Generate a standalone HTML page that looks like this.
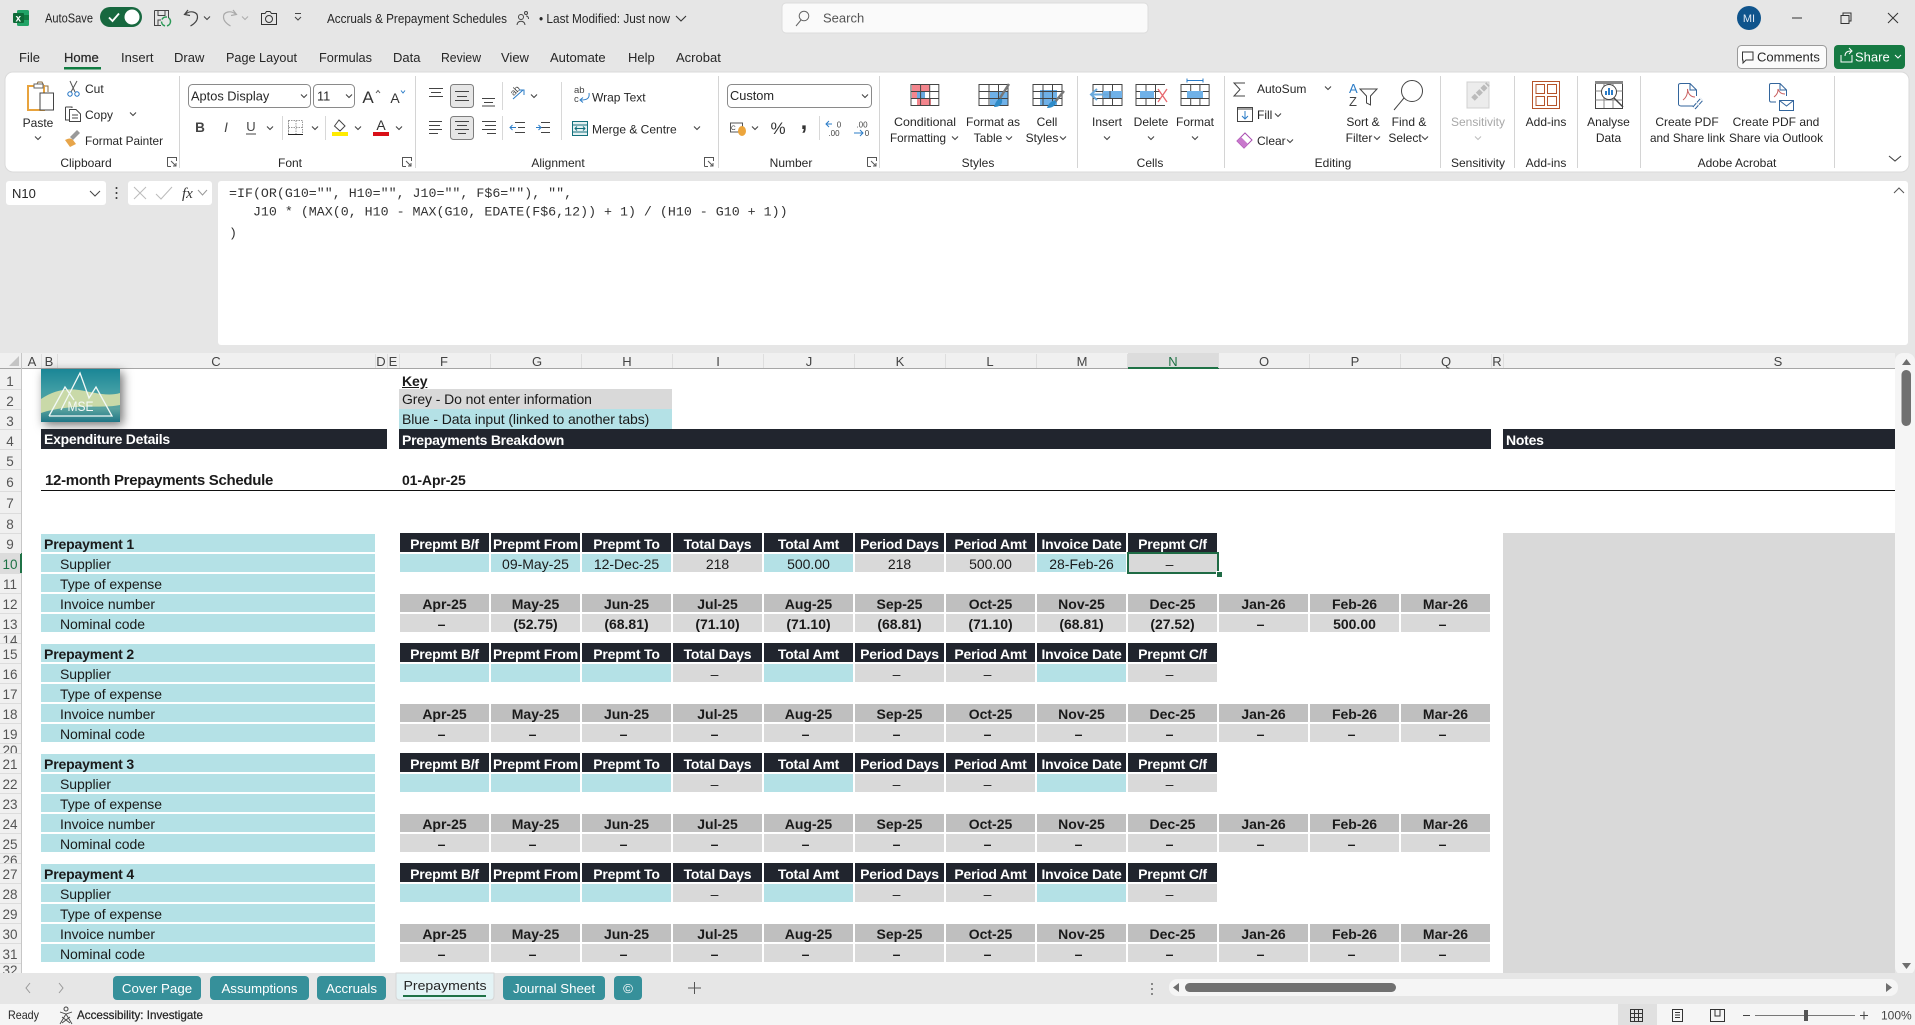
<!DOCTYPE html>
<html lang="en"><head><meta charset="utf-8"><title>Accruals &amp; Prepayment Schedules</title>
<style>
html,body{margin:0;padding:0;width:1915px;height:1025px;overflow:hidden;background:#e6e6e6;font-family:"Liberation Sans",sans-serif}
svg{position:absolute;left:0;top:0}
svg text{font-family:"Liberation Sans",sans-serif;font-size:12px;fill:#262626}
.mid{text-anchor:middle}
.tb{font-size:13px}
.cl{font-size:13px;fill:#444;text-anchor:middle}
.rn{font-size:13.5px;fill:#555;text-anchor:middle}
.wrap{position:absolute;left:0;top:0;width:1915px;height:972px;overflow:hidden}
.a{position:absolute;font-size:14px;color:#1a1a1a;line-height:20px;white-space:nowrap;letter-spacing:-.1px}
.bar{background:#21252e;color:#fff;font-weight:700;height:20px;padding-left:3px;box-sizing:border-box;line-height:21px;letter-spacing:-.25px}
.blk{position:absolute;left:0;width:1500px;height:110px}
.l{position:absolute;left:41px;width:334px;height:18px;background:#b4e1e6;font-size:14px;line-height:20px;color:#1a1a1a;padding-left:19px;box-sizing:border-box;white-space:nowrap;letter-spacing:-.05px}
.l.f{font-weight:700;padding-left:3px;letter-spacing:-.15px}
.r{position:absolute;left:400px;display:flex}
.r i{font-style:normal;display:block;flex:none;width:89px;margin-right:2px;height:18px;text-align:center;font-size:14px;line-height:20px;color:#1a1a1a;white-space:nowrap;overflow:hidden}
.k i{background:#21252e;color:#fff;font-weight:700;height:19px;line-height:22px;letter-spacing:-.2px}
.m i{background:#bfbfbf;font-weight:700}
.v i{background:#d9d9d9;font-weight:700}
.n i{background:#d9d9d9}
.r i.t{background:#b4e1e6}
.r i.d{box-sizing:border-box;padding-right:6px}
</style></head><body>

<svg width="1915" height="1025" viewBox="0 0 1915 1025" xmlns="http://www.w3.org/2000/svg">
<defs>
<path id="cv" d="M-3-1.5 0 1.5 3-1.5" fill="none" stroke="#444" stroke-width="1.1"/>
<g id="ln" fill="none" stroke="#555"><path d="M-4.5 4.5V-4.5H4.5V-1M-4.5 4.5H-1"/><path d="M-1-1 4 4M4 1V4H1"/></g>
<path id="gr" d="M0 .5H29V21.5H0ZM0 7.5H29M0 14.5H29M10 .5V21.5M19.5 .5V21.5" fill="none" stroke="#444"/>
</defs>
<rect width="1915" height="1025" fill="#e6e6e6"/>

<!-- title bar -->
<rect x="17" y="10" width="12" height="16" rx="1.5" fill="#21a366"/><rect x="17" y="15" width="12" height="5" fill="#107c41"/>
<rect x="13" y="13" width="11" height="10" rx="1" fill="#0e6b38"/><text x="15.5" y="21.5" style="font-size:10px;font-weight:700;fill:#fff">x</text>
<text x="45" y="22.5" textLength="48" lengthAdjust="spacingAndGlyphs" style="font-size:12.6px">AutoSave</text>
<rect x="100" y="7" width="42" height="20" rx="10" fill="#17683f"/><path d="M109 17.5 112.5 21 119 13.5" fill="none" stroke="#fff" stroke-width="1.8"/><circle cx="132" cy="17" r="7.5" fill="#fff"/>
<path d="M154.5 10.5H168.5V18M154.5 10.5V25.5H161M158 10.5V15.5H165V10.5M158 25.5V20H161" fill="none" stroke="#444"/>
<circle cx="166" cy="21.5" r="4.5" fill="none" stroke="#2d9a58" stroke-width="1.5" stroke-dasharray="6 2"/>
<path d="M188 10 184.5 14.5 190 15.5M185 14.5C190 10 197.5 11.5 197.5 17 197.5 21 194 24 190.5 26" fill="none" stroke="#444" stroke-width="1.2"/>
<use href="#cv" x="207" y="18"/>
<path d="M233 10 236.5 14.500 231 15.5M236 14.5C231 10 223.5 11.5 223.5 17 223.5 21 227 24 230.5 26" fill="none" stroke="#aaa" stroke-width="1.2"/>
<use href="#cv" x="245" y="18" opacity=".35"/>
<path d="M261.5 13.5H265L266.5 11.5H270L271.5 13.5H276.5V24.5H261.5Z" fill="none" stroke="#333"/><circle cx="269" cy="19" r="3.5" fill="none" stroke="#333"/>
<path d="M295 13.5H301M295 17 298 20 301 17" fill="none" stroke="#444"/>
<text x="327" y="23" textLength="180" lengthAdjust="spacingAndGlyphs" style="font-size:12.7px">Accruals &amp; Prepayment Schedules</text>
<circle cx="521" cy="17" r="2.5" fill="none" stroke="#444"/><path d="M517 25C517 20 525 20 525 25" fill="none" stroke="#444"/><circle cx="526" cy="13" r="1.5" fill="none" stroke="#444"/><path d="M526 16C527.5 16 528.500 17 528.500 19" fill="none" stroke="#444"/>
<text x="539" y="23" textLength="131" lengthAdjust="spacingAndGlyphs" style="font-size:12.7px">• Last Modified: Just now</text>
<path d="M676 16 681 21 686 16" fill="none" stroke="#333" stroke-width="1.1"/>
<rect x="782" y="3" width="366" height="30" rx="4" fill="#fafafa" stroke="#dcdcdc"/>
<circle cx="804" cy="16" r="4.8" fill="none" stroke="#666"/><path d="M801 20 796 26" stroke="#666" fill="none"/>
<text x="823" y="22.5" style="font-size:13px;fill:#555">Search</text>
<circle cx="1749" cy="18" r="12" fill="#0f548c"/><text x="1749" y="22" class="mid" style="font-size:11px;fill:#dfe9f3">MI</text>
<path d="M1792 18H1802" stroke="#333"/><path d="M1841 15.5H1849V23.5H1841ZM1843 15.5V13H1851V21H1849" fill="none" stroke="#333"/><path d="M1888 13 1898 23M1898 13 1888 23" stroke="#333"/>

<!-- menu tabs -->
<text x="19" y="62" class="tb">File</text><text x="64" y="62" class="tb" style="stroke:#262626;stroke-width:.2">Home</text><text x="121" y="62" class="tb">Insert</text><text x="174" y="62" class="tb">Draw</text><text x="226" y="62" class="tb" textLength="71" lengthAdjust="spacingAndGlyphs">Page Layout</text><text x="319" y="62" class="tb" textLength="53" lengthAdjust="spacingAndGlyphs">Formulas</text><text x="393" y="62" class="tb">Data</text><text x="441" y="62" class="tb" textLength="40" lengthAdjust="spacingAndGlyphs">Review</text><text x="501" y="62" class="tb">View</text><text x="550" y="62" class="tb">Automate</text><text x="628" y="62" class="tb">Help</text><text x="676" y="62" class="tb">Acrobat</text>
<rect x="64" y="67" width="37" height="2.5" fill="#107c41"/>
<rect x="1737.5" y="45.5" width="89" height="23" rx="4" fill="#fbfbfb" stroke="#9a9a9a"/>
<path d="M1742.5 52H1753V60H1746L1743 63V60H1742.5Z" fill="none" stroke="#333"/><text x="1757" y="61.5" style="font-size:13px">Comments</text>
<rect x="1834" y="45" width="71" height="24" rx="4" fill="#167a43"/>
<path d="M1841 55V62H1852V55M1845 56C1845 52 1848 51 1851 51M1849 48 1852 51 1849 54" fill="none" stroke="#fff"/><text x="1855" y="61.5" style="font-size:13px;fill:#fff">Share</text>
<path d="M1895 55 1898 58 1901 55" fill="none" stroke="#fff"/>

<!-- ribbon -->
<rect x="5" y="72" width="1904" height="100" rx="8" fill="#fff" stroke="#dadada"/>
<g stroke="#d4d4d4"><path d="M179.5 76V168M415.5 76V168M718.5 76V168M879.5 76V168M1077.5 76V168M1224.5 76V168M1440.5 76V168M1514.5 76V168M1577.5 76V168M1640.5 76V168M1834.5 76V168"/></g>
<g stroke="#d8d8d8"><path d="M282.5 116V140M325.5 116V140M502.5 82V110M502.5 116V140M561.5 82V140M819.5 116V140"/></g>
<!-- group labels -->
<text x="86" y="167" class="mid">Clipboard</text><text x="290" y="167" class="mid">Font</text><text x="558" y="167" class="mid">Alignment</text><text x="791" y="167" class="mid">Number</text><text x="978" y="167" class="mid">Styles</text><text x="1150" y="167" class="mid">Cells</text><text x="1333" y="167" class="mid">Editing</text><text x="1478" y="167" class="mid">Sensitivity</text><text x="1546" y="167" class="mid">Add-ins</text><text x="1737" y="167" class="mid">Adobe Acrobat</text>
<use href="#ln" x="172" y="162"/><use href="#ln" x="407" y="162"/><use href="#ln" x="709" y="162"/><use href="#ln" x="872" y="162"/>
<path d="M1889 156 1895 161 1901 156" fill="none" stroke="#444" stroke-width="1.1"/>

<!-- clipboard -->
<path d="M28 86H36L38 82H42L44 86H48V92" fill="none" stroke="#8a6b3c"/><rect x="28" y="86" width="16" height="24" fill="#fff" stroke="#e8a33d" stroke-width="2"/><path d="M34 84H43V88H34Z" fill="#fff" stroke="#666"/>
<rect x="40" y="93" width="13.5" height="17" fill="#fff" stroke="#444"/>
<text x="38" y="127" class="mid">Paste</text><use href="#cv" x="38" y="138"/>
<path d="M70 81 75 92M77 81 71 92" stroke="#555" fill="none"/><circle cx="70" cy="94" r="2.2" fill="none" stroke="#1b6fc2"/><circle cx="77" cy="94" r="2.2" fill="none" stroke="#1b6fc2"/>
<text x="85" y="93">Cut</text>
<path d="M65.5 107H72V108M65.5 107V120H69" fill="none" stroke="#444"/><path d="M69.5 109.5H76L80.5 114V121.5H69.5ZM72 115H78M72 118H78" fill="none" stroke="#444"/>
<text x="85" y="119">Copy</text><use href="#cv" x="133" y="114"/>
<path d="M73 140 80 133 77 130 70 137Z" fill="#999"/><path d="M65 140C69 138 71 138 73 140L76 144 70 147Z" fill="#e7a54a"/>
<text x="85" y="145" textLength="78" lengthAdjust="spacingAndGlyphs">Format Painter</text>

<!-- font -->
<rect x="188.5" y="84.5" width="122" height="23" rx="4" fill="#fff" stroke="#8a8a8a"/><text x="191" y="100.5" style="font-size:12.8px">Aptos Display</text><use href="#cv" x="304" y="96"/>
<rect x="313.5" y="84.5" width="41" height="23" rx="4" fill="#fff" stroke="#8a8a8a"/><text x="317" y="100.5" style="font-size:12.8px">11</text><use href="#cv" x="349" y="96"/>
<text x="368" y="103" class="mid" style="font-size:17px;fill:#333">A</text><path d="M376 93 378 90.5 380 93" fill="none" stroke="#555"/>
<text x="395" y="103" class="mid" style="font-size:14px;fill:#333">A</text><path d="M401 90.5 403 93 405 90.5" fill="none" stroke="#2b7cc7"/>
<text x="200" y="132" class="mid" style="font-size:13.5px;font-weight:700;fill:#444">B</text>
<text x="226" y="132" class="mid" style="font-size:13.5px;font-style:italic;fill:#444">I</text>
<text x="251" y="131" class="mid" style="font-size:13px;fill:#444">U</text><path d="M246 134H256" stroke="#444"/><use href="#cv" x="270" y="128"/>
<path d="M288.5 120.5V134.5M296 120.5V134.5M288.5 127.5H303" stroke="#999" stroke-dasharray="1.5 1" fill="none"/><rect x="288.5" y="120.5" width="14" height="14" fill="none" stroke="#999" stroke-dasharray="1.5 1"/><path d="M288 134.5H303" stroke="#222"/><use href="#cv" x="315" y="128"/>
<path d="M339 120 345 126 340 131 334.5 126Z" fill="#fff" stroke="#444"/><rect x="332" y="132" width="16" height="4" fill="#ffeb00"/><use href="#cv" x="358" y="128"/>
<text x="381" y="130" class="mid" style="font-size:14px;fill:#333">A</text><rect x="373" y="132" width="16" height="4" fill="#d90f17"/><use href="#cv" x="399" y="128"/>

<!-- alignment -->
<rect x="450.5" y="84.5" width="23" height="23" rx="3" fill="#e6e6e6" stroke="#7e7e7e"/>
<rect x="450.5" y="116.5" width="23" height="23" rx="3" fill="#e6e6e6" stroke="#7e7e7e"/>
<g stroke="#444" fill="none">
<path d="M429 88.5H443M431 92.5H441M429 96.5H443"/>
<path d="M455 91.5H469M457 96.5H467M455 100.5H469"/>
<path d="M482 98.5H495M484 102.5H493M482 106H495"/>
<path d="M429 121.5H442M429 125.5H440M429 129.5H442M429 133.5H438"/>
<path d="M455 121.5H469M457 125.5H467M455 129.5H469M458 133.5H466"/>
<path d="M482 121.5H496M485 125.5H496M482 129.5H496M487 133.5H496"/>
<path d="M515 122.5H525M518 127.5H525M515 132.5H525"/>
<path d="M541 122.5H550M541 127.5H550M541 132.5H550"/>
</g>
<path d="M510 127.5H516M512.5 125 510 127.5 512.5 130" fill="none" stroke="#2b7cc7"/>
<path d="M536 127.5H540M538.5 125 541 127.5 538.5 130" fill="none" stroke="#2b7cc7"/>
<text x="511" y="94" style="font-size:9px;fill:#444" transform="rotate(-45 515 92)">ab</text><path d="M513 99 523 90M519 90H524V95" fill="none" stroke="#2b7cc7"/><use href="#cv" x="534" y="96"/>
<text x="574" y="93" style="font-size:9.5px;fill:#444">ab</text><text x="574" y="102" style="font-size:9.5px;fill:#444">c</text><path d="M589 93C590 99 586 100 581 100M583 97.5 580 100 583 102.5" fill="none" stroke="#2b7cc7"/>
<text x="592" y="101.5">Wrap Text</text>
<rect x="572.5" y="121.5" width="15" height="14" fill="#e4f1f2" stroke="#13707c"/><path d="M572.5 125H587.5M572.5 132H587.5M575 128.5H585M577 126.5 575 128.5 577 130.5M583 126.5 585 128.5 583 130.5" fill="none" stroke="#13707c"/>
<text x="592" y="133.5">Merge &amp; Centre</text><use href="#cv" x="697" y="128"/>

<!-- number -->
<rect x="727.5" y="84.5" width="144" height="23" rx="4" fill="#fff" stroke="#8a8a8a"/><text x="730" y="100" style="font-size:12.8px">Custom</text><use href="#cv" x="865" y="96"/>
<rect x="730.5" y="123" width="12" height="9" fill="#fff" stroke="#555"/><ellipse cx="742" cy="131" rx="4" ry="5" fill="#eca53c"/><text x="731" y="130" style="font-size:6.5px;fill:#333">C</text>
<use href="#cv" x="755" y="128"/>
<text x="778" y="134" class="mid" style="font-size:17px;fill:#333">%</text>
<text x="804" y="129" class="mid" style="font-size:24px;font-weight:700;fill:#333">,</text>
<path d="M832 124H826M829 121 826 124 829 127" fill="none" stroke="#2b7cc7"/><text x="839" y="127.5" class="mid" style="font-size:8px;fill:#444">0</text><text x="834" y="136" class="mid" style="font-size:8px;fill:#444">.00</text>
<path d="M854 133H863M860 130 863 133 860 136" fill="none" stroke="#2b7cc7"/><text x="862" y="127.5" class="mid" style="font-size:8px;fill:#444">.00</text><text x="867" y="136" class="mid" style="font-size:8px;fill:#444">0</text>

<!-- styles -->
<rect x="912" y="84" width="18" height="7" fill="#f3858d"/><rect x="912" y="91" width="5" height="7" fill="#f3858d"/><rect x="917" y="91" width="8" height="7" fill="#6aa9e0"/><rect x="917" y="98" width="14" height="8" fill="#f3858d"/>
<use href="#gr" transform="translate(911 84) scale(.96 1)"/>
<text x="925" y="126" class="mid" textLength="62" lengthAdjust="spacingAndGlyphs">Conditional</text><text x="918" y="142" class="mid" textLength="56" lengthAdjust="spacingAndGlyphs">Formatting</text><use href="#cv" x="955" y="138"/>
<rect x="990" y="91" width="18" height="15" fill="#6fb1e8"/><use href="#gr" transform="translate(979 84)"/>
<path d="M1009 84 1000 98" stroke="#777" stroke-width="2.5"/><path d="M994 107C996 100 999 98 1002 99 1003 104 1000 107 994 107Z" fill="#2e8bc8"/>
<text x="993" y="126" class="mid">Format as</text><text x="988" y="142" class="mid">Table</text><use href="#cv" x="1009" y="138"/>
<rect x="1040" y="90" width="17" height="15" fill="#6fb1e8"/><use href="#gr" transform="translate(1033 84)"/>
<path d="M1064 91 1055 102" stroke="#777" stroke-width="2.5"/><path d="M1047 108C1049 102 1053 100 1056 101 1056 106 1052 108 1047 108Z" fill="#2e8bc8"/>
<text x="1047" y="126" class="mid">Cell</text><text x="1042" y="142" class="mid">Styles</text><use href="#cv" x="1063" y="138"/>

<!-- cells -->
<use href="#gr" transform="translate(1093 84)"/><rect x="1103" y="91" width="19" height="7" fill="#6fb1e8"/><path d="M1110 91V98" stroke="#444"/><path d="M1091 94.5H1108M1097 89 1091 94.5 1097 100" fill="none" stroke="#69a9dc" stroke-width="2"/>
<text x="1107" y="126" class="mid">Insert</text><use href="#cv" x="1107" y="138"/>
<use href="#gr" transform="translate(1136 84)"/><rect x="1140" y="91" width="14" height="7" fill="#6fb1e8"/><rect x="1157" y="84" width="11" height="22" fill="#fff"/><path d="M1157 84.5H1165M1157 105.5H1165M1157 91.5H1160M1157 98.5H1160" stroke="#444"/><path d="M1158 89 1167 102M1167 89 1158 102" stroke="#e8686e" stroke-width="1.3"/>
<text x="1151" y="126" class="mid">Delete</text><use href="#cv" x="1151" y="138"/>
<use href="#gr" transform="translate(1181 84) scale(.97 1)"/><rect x="1187" y="91" width="16" height="7" fill="#6fb1e8"/><path d="M1187 80.5H1203M1187 78.5V82.5M1203 78.5V82.5" stroke="#2b7cc7" fill="none"/>
<text x="1195" y="126" class="mid">Format</text><use href="#cv" x="1195" y="138"/>

<!-- editing -->
<path d="M1245 83H1234L1240 89.5 1234 96H1245" fill="none" stroke="#444"/>
<text x="1257" y="93">AutoSum</text><use href="#cv" x="1328" y="88"/>
<rect x="1237.5" y="107.5" width="15" height="14" fill="#fff" stroke="#444"/><path d="M1237.5 109H1252.5" stroke="#444"/><path d="M1245 111V119M1242 116 1245 119 1248 116" fill="none" stroke="#2b7cc7"/>
<text x="1257" y="119">Fill</text><use href="#cv" x="1278" y="115"/>
<path d="M1237 141 1245 133 1252 140 1244 148Z" fill="#fff" stroke="#a94db0"/><path d="M1237 141 1241 137 1248 144 1244 148Z" fill="#c878cc"/>
<text x="1257" y="145">Clear</text><use href="#cv" x="1290" y="141"/>
<text x="1349" y="93" style="font-size:13px;fill:#2b7cc7">A</text><text x="1349" y="106" style="font-size:13px;fill:#444">Z</text>
<path d="M1360 89H1377L1370.5 96V105L1366.5 103V96Z" fill="none" stroke="#444"/>
<text x="1363" y="126" class="mid">Sort &amp;</text><text x="1359" y="142" class="mid">Filter</text><use href="#cv" x="1377" y="138"/>
<circle cx="1412" cy="91" r="10.5" fill="none" stroke="#444"/><path d="M1404 98 1394 110" stroke="#444" fill="none"/>
<text x="1409" y="126" class="mid">Find &amp;</text><text x="1405" y="142" class="mid">Select</text><use href="#cv" x="1425" y="138"/>

<!-- sensitivity -->
<rect x="1467" y="82" width="22" height="26" fill="#ececec" stroke="#d0d0d0"/><path d="M1473 99 1488 84" stroke="#bbb" stroke-width="5" stroke-dasharray="5 1.5"/>
<text x="1478" y="126" class="mid" style="fill:#a8a8a8">Sensitivity</text><use href="#cv" x="1478" y="138" opacity=".35"/>

<!-- add-ins -->
<rect x="1532.5" y="81.5" width="27" height="27" fill="#fff" stroke="#b5532a"/><path d="M1536 84.5H1544.5V93.5H1536ZM1547.5 84.5H1556.5V93.5H1547.5ZM1536 96.5H1544.5V105.5H1536ZM1547.5 96.5H1556.5V105.5H1547.5Z" fill="none" stroke="#b5532a"/>
<text x="1546" y="126" class="mid">Add-ins</text>
<rect x="1595.5" y="81.5" width="27" height="27" fill="#fff" stroke="#444"/><rect x="1595" y="81" width="28" height="3" fill="#888"/><path d="M1595.5 91H1622.5M1595.5 100H1622.5M1604 84V108M1613 84V108" stroke="#888"/><circle cx="1609" cy="92" r="7.5" fill="#fff" stroke="#444"/><path d="M1606 95V91M1609 95V88M1612 95V90" stroke="#2b7cc7" stroke-width="2"/><path d="M1614 98 1623 107" stroke="#444" stroke-width="1.4"/>
<text x="1608.5" y="126" class="mid">Analyse</text><text x="1608.5" y="142" class="mid">Data</text>

<!-- acrobat -->
<path d="M1693 106H1681C1679.5 106 1678.5 105 1678.5 104V85C1678.5 84 1679.5 83.5 1681 83.5H1690L1696.5 90V96" fill="none" stroke="#33659c"/><path d="M1690 83.5V90H1696.5" fill="none" stroke="#33659c"/><path d="M1683 100C1687 97 1688 92 1687.5 89 1688 94 1691 97 1695 97" fill="none" stroke="#c96060"/>
<path d="M1694 108 1702 99" fill="none" stroke="#33659c" stroke-width="4" stroke-dasharray="5 1"/><path d="M1694 108 1702 99" fill="none" stroke="#fff" stroke-width="2" stroke-dasharray="5 1"/>
<text x="1687" y="126" class="mid">Create PDF</text><text x="1687.500" y="142" class="mid" textLength="75" lengthAdjust="spacingAndGlyphs">and Share link</text>
<path d="M1776 102H1771C1770 102 1769.5 101 1769.5 100V85C1769.5 84 1770 83.5 1771 83.5H1780L1786.5 90V96" fill="none" stroke="#33659c"/><path d="M1780 83.5V90H1786.5" fill="none" stroke="#33659c"/><path d="M1774 97C1778 94 1778 91 1778 89 1779 92 1781 94 1785 94" fill="none" stroke="#c96060"/>
<rect x="1779.5" y="100.5" width="14" height="10" fill="#fff" stroke="#33659c"/><path d="M1779.5 100.5 1786.5 106 1793.5 100.5" fill="none" stroke="#33659c"/>
<text x="1776" y="126" class="mid">Create PDF and</text><text x="1776" y="142" class="mid" textLength="94" lengthAdjust="spacingAndGlyphs">Share via Outlook</text>

<!-- formula bar -->
<rect x="6" y="181" width="100" height="24" rx="3" fill="#fff"/><text x="12" y="198" style="font-size:13px">N10</text><path d="M90 191 95 196 100 191" fill="none" stroke="#444"/>
<circle cx="116.5" cy="188" r="1" fill="#333"/><circle cx="116.5" cy="193" r="1" fill="#333"/><circle cx="116.5" cy="198" r="1" fill="#333"/>
<rect x="128" y="181" width="84" height="24" rx="3" fill="#fff"/><path d="M134 187 146 199M146 187 134 199" stroke="#bbb" fill="none"/><path d="M156 194 161 199 172 187" stroke="#bbb" fill="none"/>
<text x="182" y="198" style="font-family:'Liberation Serif',serif;font-style:italic;font-size:15px;fill:#333">fx</text><path d="M198 190 202.5 195 207 190" fill="none" stroke="#999"/>
<rect x="218" y="181" width="1690" height="164" rx="3" fill="#fff"/>
<text x="229" y="197" xml:space="preserve" style="font-family:'Liberation Mono',monospace;font-size:13.3px;fill:#333">=IF(OR(G10="", H10="", J10="", F$6=""), "",</text>
<text x="229" y="215.5" xml:space="preserve" style="font-family:'Liberation Mono',monospace;font-size:13.3px;fill:#333">   J10 * (MAX(0, H10 - MAX(G10, EDATE(F$6,12)) + 1) / (H10 - G10 + 1))</text>
<text x="229" y="237" xml:space="preserve" style="font-family:'Liberation Mono',monospace;font-size:13.3px;fill:#333">)</text>
<path d="M1894 193 1899 188 1904 193" fill="none" stroke="#555"/>

<!-- grid headers -->
<rect x="0" y="353" width="1895" height="16" fill="#f0f0f0"/>
<rect x="0" y="369" width="22" height="604" fill="#f0f0f0"/>
<rect x="22" y="369" width="1873" height="604" fill="#fff"/>
<path d="M0 368.5H1895" stroke="#a6a6a6"/><path d="M21.5 353V973" stroke="#c6c6c6"/>
<path d="M19 366H9L19 356Z" fill="#c4c4c4"/>
<rect x="1128" y="353" width="91" height="16" fill="#dcdcdc"/><rect x="1128" y="367" width="91" height="2" fill="#1f7246"/>
<g stroke="#dedede"><path d="M41.5 354V368M57.5 354V368M375.5 354V368M387.5 354V368M399.5 354V368M490.5 354V368M581.5 354V368M672.5 354V368M763.5 354V368M854.5 354V368M945.5 354V368M1036.5 354V368M1127.5 354V368M1218.5 354V368M1309.5 354V368M1400.5 354V368M1491.5 354V368M1503.5 354V368"/></g>
<text x="32" y="366" class="cl">A</text><text x="49" y="366" class="cl">B</text><text x="216" y="366" class="cl">C</text><text x="381" y="366" class="cl">D</text><text x="393" y="366" class="cl">E</text><text x="444" y="366" class="cl">F</text><text x="537" y="366" class="cl">G</text><text x="627" y="366" class="cl">H</text><text x="718" y="366" class="cl">I</text><text x="809" y="366" class="cl">J</text><text x="900" y="366" class="cl">K</text><text x="990" y="366" class="cl">L</text><text x="1082" y="366" class="cl">M</text><text x="1173" y="366" class="cl" style="fill:#1f7246">N</text><text x="1264" y="366" class="cl">O</text><text x="1355" y="366" class="cl">P</text><text x="1446" y="366" class="cl">Q</text><text x="1497" y="366" class="cl">R</text><text x="1778" y="366" class="cl">S</text>
<rect x="0" y="553" width="22" height="20" fill="#dcdcdc"/><rect x="20" y="553" width="2" height="20" fill="#1f7246"/>
<g stroke="#dcdcdc"><path d="M0 389.5H21M0 409.5H21M0 429.5H21M0 449.5H21M0 469.5H21M0 491.5H21M0 513.5H21M0 533.5H21M0 553.5H21M0 573.5H21M0 593.5H21M0 613.5H21M0 633.5H21M0 643.5H21M0 663.5H21M0 683.5H21M0 703.5H21M0 723.5H21M0 743.5H21M0 753.5H21M0 773.5H21M0 793.5H21M0 813.5H21M0 833.5H21M0 853.5H21M0 863.5H21M0 883.5H21M0 903.5H21M0 923.5H21M0 943.5H21M0 963.5H21"/></g>
<text x="10" y="386" class="rn">1</text><text x="10" y="406" class="rn">2</text><text x="10" y="426" class="rn">3</text><text x="10" y="446" class="rn">4</text><text x="10" y="466" class="rn">5</text><text x="10" y="487" class="rn">6</text><text x="10" y="508" class="rn">7</text><text x="10" y="529" class="rn">8</text><text x="10" y="549" class="rn">9</text>
<text x="10" y="569" class="rn" style="fill:#1f7246">10</text><text x="10" y="589" class="rn">11</text><text x="10" y="609" class="rn">12</text><text x="10" y="629" class="rn">13</text>
<svg x="0" y="634" width="21" height="9"><text x="10" y="11" class="rn" style="font-size:13.5px">14</text></svg>
<text x="10" y="659" class="rn">15</text><text x="10" y="679" class="rn">16</text><text x="10" y="699" class="rn">17</text><text x="10" y="719" class="rn">18</text><text x="10" y="739" class="rn">19</text>
<svg x="0" y="744" width="21" height="9"><text x="10" y="11" class="rn" style="font-size:13.5px">20</text></svg>
<text x="10" y="769" class="rn">21</text><text x="10" y="789" class="rn">22</text><text x="10" y="809" class="rn">23</text><text x="10" y="829" class="rn">24</text><text x="10" y="849" class="rn">25</text>
<svg x="0" y="854" width="21" height="9"><text x="10" y="11" class="rn" style="font-size:13.5px">26</text></svg>
<text x="10" y="879" class="rn">27</text><text x="10" y="899" class="rn">28</text><text x="10" y="919" class="rn">29</text><text x="10" y="939" class="rn">30</text><text x="10" y="959" class="rn">31</text>
<svg x="0" y="964" width="21" height="9"><text x="10" y="11" class="rn" style="font-size:13.5px">32</text></svg>

<!-- v scrollbar -->
<rect x="1895" y="353" width="20" height="622" rx="8" fill="#f5f5f5"/>
<path d="M1902 365H1911L1906.5 359Z" fill="#6e6e6e"/><rect x="1901.5" y="370" width="9.5" height="56" rx="4.7" fill="#707070"/><path d="M1902 963H1911L1906.5 969Z" fill="#6e6e6e"/>

<!-- notes area -->
<rect x="1503" y="533" width="392" height="440" fill="#d9d9d9"/>

<!-- sheet tabs -->
<rect x="0" y="973" width="1915" height="31" fill="#e6e6e6"/>
<path d="M30 983 26 988 30 993M59 983 63 988 59 993" fill="none" stroke="#999"/>
<rect x="113" y="976" width="88" height="24" rx="4" fill="#36909a"/><text x="157" y="993" class="mid" style="font-size:13.3px;fill:#fff">Cover Page</text>
<rect x="210" y="976" width="99" height="24" rx="4" fill="#36909a"/><text x="259.5" y="993" class="mid" style="font-size:13.3px;fill:#fff">Assumptions</text>
<rect x="317" y="976" width="69" height="24" rx="4" fill="#36909a"/><text x="351.5" y="993" class="mid" style="font-size:13.3px;fill:#fff">Accruals</text>
<path d="M396 973H494V996C494 999 492 1000 490 1000H400C398 1000 396 999 396 996Z" fill="#e4f3f5" stroke="#d6d6d6"/><text x="445" y="990" class="mid" textLength="83" lengthAdjust="spacingAndGlyphs" style="font-size:13.3px">Prepayments</text><rect x="403" y="995" width="83" height="2" fill="#1f7246"/>
<rect x="503" y="976" width="102" height="24" rx="4" fill="#36909a"/><text x="554" y="993" class="mid" style="font-size:13.3px;fill:#fff">Journal Sheet</text>
<rect x="614" y="976" width="28" height="24" rx="4" fill="#36909a"/><text x="628" y="993" class="mid" style="font-size:13.3px;fill:#fff">©</text>
<path d="M694.5 982V994M688 988H701" stroke="#555"/>

<!-- h scrollbar -->
<circle cx="1152" cy="984" r=".9" fill="#444"/><circle cx="1152" cy="989" r=".9" fill="#444"/><circle cx="1152" cy="994" r=".9" fill="#444"/>
<rect x="1169" y="979" width="729" height="17" rx="8" fill="#f5f5f5"/>
<path d="M1179 983V992L1173 987.5Z" fill="#6e6e6e"/><rect x="1185" y="983" width="211" height="9" rx="4.5" fill="#707070"/><path d="M1886 983V992L1892 987.5Z" fill="#6e6e6e"/>

<!-- status -->
<rect x="0" y="1004" width="1915" height="21" fill="#f5f5f5"/>
<text x="8" y="1019" textLength="31" lengthAdjust="spacingAndGlyphs" style="font-size:12px">Ready</text>
<circle cx="66" cy="1009" r="2" fill="none" stroke="#444"/><path d="M60 1012 66 1014 72 1012M66 1014 60 1024M66 1014 72 1024M62 1017 70 1023M70 1017 62 1023" fill="none" stroke="#444" stroke-width=".9"/>
<text x="77" y="1019" textLength="126" lengthAdjust="spacingAndGlyphs" style="font-size:11.8px;stroke:#262626;stroke-width:.25">Accessibility: Investigate</text>
<rect x="1618" y="1004" width="39" height="21" fill="#e0e0e0"/>
<path d="M1630.5 1009.5H1642.5V1021.5H1630.5ZM1630.5 1013.5H1642.5M1630.5 1017.5H1642.5M1634.5 1009.5V1021.5M1638.5 1009.5V1021.5" fill="none" stroke="#333"/>
<path d="M1672.5 1009.5H1682.5V1021.5H1672.5ZM1675 1012.5H1680M1675 1015H1680M1675 1017.5H1680" fill="none" stroke="#333"/>
<path d="M1710.5 1009.5H1724.5V1021.5H1710.5ZM1715 1009.5V1016H1720V1009.5" fill="none" stroke="#333"/>
<path d="M1743 1015.5H1750M1860 1015.5H1868M1864 1011.5V1019.5" stroke="#444"/><path d="M1755 1015.5H1855" stroke="#777"/><rect x="1804" y="1010" width="4" height="11" fill="#555"/>
<text x="1881" y="1019.5" style="font-size:12px;fill:#444">100%</text>
</svg>

<div class="wrap">
<!-- logo -->
<svg style="left:41px;top:369px;filter:drop-shadow(3px 3px 5px rgba(0,0,0,.55))" width="79" height="53" viewBox="0 0 79 53" overflow="visible">
<defs><linearGradient id="lg" x1="0" y1="0" x2="0" y2="1"><stop offset="0" stop-color="#1a8696"/><stop offset=".4" stop-color="#3f9da4"/><stop offset=".75" stop-color="#5aa39f"/><stop offset="1" stop-color="#1f7686"/></linearGradient></defs>
<rect width="79" height="53" fill="url(#lg)"/>
<path d="M0 30C12 22 24 19 38 21 52 23 66 28 79 24V36C60 40 30 34 0 44Z" fill="#c9d9a8"/>
<path d="M8 47H71L55 18 48 29 39 4 20 41M8 47 24 18 33 31" fill="none" stroke="#f2f9f7" stroke-width="1.3"/>
<text x="39.500" y="42" class="mid" textLength="26" lengthAdjust="spacingAndGlyphs" style="font-size:14px;fill:#f4f9f7">MSE</text>
</svg>

<div class="a" style="left:402px;top:371px;font-weight:700;text-decoration:underline">Key</div>
<div class="a" style="left:399px;top:389px;width:273px;height:20px;background:#d9d9d9;padding-left:3px;box-sizing:border-box">Grey - Do not enter information</div>
<div class="a" style="left:399px;top:409px;width:273px;height:20px;background:#b4e1e6;padding-left:3px;box-sizing:border-box">Blue - Data input (linked to another tabs)</div>
<div class="a bar" style="left:41px;top:429px;width:346px">Expenditure Details</div>
<div class="a bar" style="left:399px;top:429px;width:1092px;line-height:22px">Prepayments Breakdown</div>
<div class="a bar" style="left:1503px;top:429px;width:392px;line-height:22px">Notes</div>
<div class="a" style="left:45px;top:471px;font-weight:700;font-size:15px;letter-spacing:-.3px">12-month Prepayments Schedule</div>
<div class="a" style="left:402px;top:470px;font-weight:700">01-Apr-25</div>
<div class="a" style="left:41px;top:489.5px;width:1854px;height:1.5px;background:#111"></div>

<div class="blk" style="top:533px">
<div class="l f" style="top:1px">Prepayment 1</div><div class="l" style="top:21px">Supplier</div><div class="l" style="top:41px">Type of expense</div><div class="l" style="top:61px">Invoice number</div><div class="l" style="top:81px">Nominal code</div>
<div class="r k" style="top:0"><i>Prepmt B/f</i><i>Prepmt From</i><i>Prepmt To</i><i>Total Days</i><i>Total Amt</i><i>Period Days</i><i>Period Amt</i><i>Invoice Date</i><i>Prepmt C/f</i></div>
<div class="r n" style="top:21px"><i class="t"></i><i class="t">09-May-25</i><i class="t">12-Dec-25</i><i>218</i><i class="t">500.00</i><i>218</i><i>500.00</i><i class="t">28-Feb-26</i><i class="d">–</i></div>
<div class="r m" style="top:61px"><i>Apr-25</i><i>May-25</i><i>Jun-25</i><i>Jul-25</i><i>Aug-25</i><i>Sep-25</i><i>Oct-25</i><i>Nov-25</i><i>Dec-25</i><i>Jan-26</i><i>Feb-26</i><i>Mar-26</i></div>
<div class="r v" style="top:81px"><i class="d">–</i><i>(52.75)</i><i>(68.81)</i><i>(71.10)</i><i>(71.10)</i><i>(68.81)</i><i>(71.10)</i><i>(68.81)</i><i>(27.52)</i><i class="d">–</i><i>500.00</i><i class="d">–</i></div>
</div>

<div class="blk" style="top:643px">
<div class="l f" style="top:1px">Prepayment 2</div><div class="l" style="top:21px">Supplier</div><div class="l" style="top:41px">Type of expense</div><div class="l" style="top:61px">Invoice number</div><div class="l" style="top:81px">Nominal code</div>
<div class="r k" style="top:0"><i>Prepmt B/f</i><i>Prepmt From</i><i>Prepmt To</i><i>Total Days</i><i>Total Amt</i><i>Period Days</i><i>Period Amt</i><i>Invoice Date</i><i>Prepmt C/f</i></div>
<div class="r n" style="top:21px"><i class="t"></i><i class="t"></i><i class="t"></i><i class="d">–</i><i class="t"></i><i class="d">–</i><i class="d">–</i><i class="t"></i><i class="d">–</i></div>
<div class="r m" style="top:61px"><i>Apr-25</i><i>May-25</i><i>Jun-25</i><i>Jul-25</i><i>Aug-25</i><i>Sep-25</i><i>Oct-25</i><i>Nov-25</i><i>Dec-25</i><i>Jan-26</i><i>Feb-26</i><i>Mar-26</i></div>
<div class="r v" style="top:81px"><i class="d">–</i><i class="d">–</i><i class="d">–</i><i class="d">–</i><i class="d">–</i><i class="d">–</i><i class="d">–</i><i class="d">–</i><i class="d">–</i><i class="d">–</i><i class="d">–</i><i class="d">–</i></div>
</div>

<div class="blk" style="top:753px">
<div class="l f" style="top:1px">Prepayment 3</div><div class="l" style="top:21px">Supplier</div><div class="l" style="top:41px">Type of expense</div><div class="l" style="top:61px">Invoice number</div><div class="l" style="top:81px">Nominal code</div>
<div class="r k" style="top:0"><i>Prepmt B/f</i><i>Prepmt From</i><i>Prepmt To</i><i>Total Days</i><i>Total Amt</i><i>Period Days</i><i>Period Amt</i><i>Invoice Date</i><i>Prepmt C/f</i></div>
<div class="r n" style="top:21px"><i class="t"></i><i class="t"></i><i class="t"></i><i class="d">–</i><i class="t"></i><i class="d">–</i><i class="d">–</i><i class="t"></i><i class="d">–</i></div>
<div class="r m" style="top:61px"><i>Apr-25</i><i>May-25</i><i>Jun-25</i><i>Jul-25</i><i>Aug-25</i><i>Sep-25</i><i>Oct-25</i><i>Nov-25</i><i>Dec-25</i><i>Jan-26</i><i>Feb-26</i><i>Mar-26</i></div>
<div class="r v" style="top:81px"><i class="d">–</i><i class="d">–</i><i class="d">–</i><i class="d">–</i><i class="d">–</i><i class="d">–</i><i class="d">–</i><i class="d">–</i><i class="d">–</i><i class="d">–</i><i class="d">–</i><i class="d">–</i></div>
</div>

<div class="blk" style="top:863px">
<div class="l f" style="top:1px">Prepayment 4</div><div class="l" style="top:21px">Supplier</div><div class="l" style="top:41px">Type of expense</div><div class="l" style="top:61px">Invoice number</div><div class="l" style="top:81px">Nominal code</div>
<div class="r k" style="top:0"><i>Prepmt B/f</i><i>Prepmt From</i><i>Prepmt To</i><i>Total Days</i><i>Total Amt</i><i>Period Days</i><i>Period Amt</i><i>Invoice Date</i><i>Prepmt C/f</i></div>
<div class="r n" style="top:21px"><i class="t"></i><i class="t"></i><i class="t"></i><i class="d">–</i><i class="t"></i><i class="d">–</i><i class="d">–</i><i class="t"></i><i class="d">–</i></div>
<div class="r m" style="top:61px"><i>Apr-25</i><i>May-25</i><i>Jun-25</i><i>Jul-25</i><i>Aug-25</i><i>Sep-25</i><i>Oct-25</i><i>Nov-25</i><i>Dec-25</i><i>Jan-26</i><i>Feb-26</i><i>Mar-26</i></div>
<div class="r v" style="top:81px"><i class="d">–</i><i class="d">–</i><i class="d">–</i><i class="d">–</i><i class="d">–</i><i class="d">–</i><i class="d">–</i><i class="d">–</i><i class="d">–</i><i class="d">–</i><i class="d">–</i><i class="d">–</i></div>
</div>

<!-- selection -->
<div style="position:absolute;left:1127px;top:552px;width:92px;height:22px;box-sizing:border-box;border:2px solid #1f6b45"></div>
<div style="position:absolute;left:1216px;top:571px;width:5px;height:5px;background:#1f6b45;border:1px solid #fff;box-sizing:content-box"></div>
</div>
</body></html>
